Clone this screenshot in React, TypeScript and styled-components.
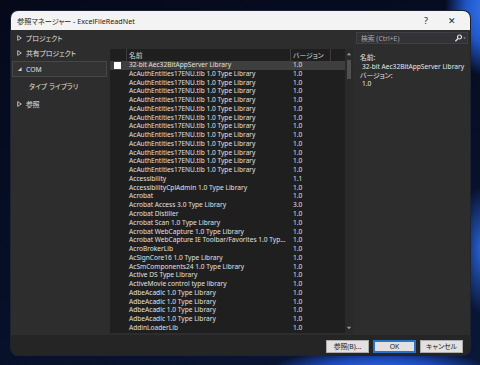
import React from "react";
import styled, { createGlobalStyle } from "styled-components";

const GlobalStyle = createGlobalStyle`
  html, body { margin: 0; padding: 0; }
  body {
    width: 480px;
    height: 365px;
    overflow: hidden;
    font-family: "Noto Sans", "Noto Sans CJK JP", sans-serif;
    font-feature-settings: "palt";
  }
`;

const Page = styled.div`
  width: 480px;
  height: 365px;
  box-sizing: border-box;
  padding: 11px 10px 10px 11px;
  background:
    radial-gradient(ellipse 60px 90px at 490px 10px, #3a7df0 0%, #1f56c8 40%, rgba(10,30,90,0) 75%),
    radial-gradient(ellipse 140px 30px at 380px 372px, #2f6fe8 0%, #1b48b8 45%, rgba(10,30,90,0) 80%),
    radial-gradient(ellipse 30px 80px at 482px 250px, #2a64db 0%, rgba(10,30,90,0) 80%),
    linear-gradient(160deg, #05091a 0%, #071028 60%, #0a1738 100%);
`;

const Dialog = styled.div`
  width: 459px;
  height: 344px;
  display: flex;
  flex-direction: column;
  border-radius: 7px;
  overflow: hidden;
  background: #2d2d2d;
  box-shadow: 0 0 0 1px #1c2433;
`;

const TitleBar = styled.div`
  height: 19px;
  flex: none;
  display: flex;
  align-items: center;
  background: #f3f3f3;
  padding-left: 6px;
  color: #1a1a1a;
  font-size: 7.2px;
`;

const TitleText = styled.span`
  flex: 1;
`;

const TitleButton = styled.span<{ $w: number }>`
  width: ${(p) => p.$w}px;
  text-align: center;
  font-size: 9px;
  color: #222;
`;

const Body = styled.div`
  flex: 1;
  display: grid;
  grid-template-columns: 97px 243px 115px;
  column-gap: 2px;
  min-height: 0;
`;

const LeftPanel = styled.div`
  display: flex;
  flex-direction: column;
  padding-left: 1px;
`;

const NavItem = styled.div<{ $selected?: boolean; $indent?: boolean; $h: number }>`
  height: ${(p) => p.$h}px;
  display: flex;
  align-items: center;
  box-sizing: border-box;
  padding-left: ${(p) => (p.$indent ? 16 : 4)}px;
  gap: 4px;
  font-size: 6.8px;
  color: #e0e0e0;
  border: 1px solid ${(p) => (p.$selected ? "#474747" : "transparent")};
  background: ${(p) => (p.$selected ? "#333333" : "transparent")};
  margin-right: 1px;
`;

const Arrow = styled.svg`
  width: 5px;
  height: 6px;
  flex: none;
`;

const Center = styled.div`
  padding-top: 19px;
  padding-bottom: 2px;
  display: flex;
  min-height: 0;
`;

const ListMain = styled.div`
  width: 235px;
  background: #1f1f1f;
  display: flex;
  flex-direction: column;
  overflow: hidden;
`;

const COLS = "17px 164px 40px 14px";

const HeaderRow = styled.div`
  height: 12px;
  flex: none;
  display: grid;
  grid-template-columns: ${COLS};
  font-size: 6.8px;
  color: #d8d8d8;
`;

const HeaderCell = styled.div<{ $last?: boolean }>`
  border-right: 1px solid ${(p) => (p.$last ? "transparent" : "#3c3c3c")};
  display: flex;
  align-items: center;
  padding-left: 2px;
  box-sizing: border-box;
`;

const Row = styled.div<{ $selected?: boolean }>`
  height: 8.77px;
  flex: none;
  display: grid;
  grid-template-columns: ${COLS};
  align-items: center;
  font-size: 6.6px;
  line-height: 8.77px;
  color: #e0e0e0;
  background: ${(p) => (p.$selected ? "#3f3f3f" : "transparent")};
`;

const Cell = styled.div`
  padding-left: 2px;
  white-space: nowrap;
  overflow: hidden;
`;

const CheckCell = styled.div`
  display: flex;
  align-items: center;
  padding-left: 4px;
`;

const CheckBox = styled.div`
  width: 7px;
  height: 7px;
  background: #ffffff;
`;

const ScrollBar = styled.div`
  width: 8px;
  background: #2a2a2a;
  display: flex;
  flex-direction: column;
  align-items: center;
`;

const ScrollArrow = styled.svg`
  width: 6px;
  height: 6px;
  flex: none;
  margin: 2px 0;
`;

const Thumb = styled.div`
  width: 4px;
  height: 19px;
  background: #505050;
  margin-top: 1px;
`;

const Spacer = styled.div`
  flex: 1;
`;

const RightPanel = styled.div`
  display: flex;
  flex-direction: column;
  padding-top: 2px;
  padding-right: 2px;
`;

const Search = styled.div`
  height: 12px;
  box-sizing: border-box;
  background: #333337;
  border: 1px solid #3f3f46;
  display: flex;
  align-items: center;
  padding-left: 4px;
  margin-left: 1px;
  font-size: 6.8px;
  color: #a8a8a8;
`;

const SearchText = styled.span`
  flex: 1;
`;

const Details = styled.div`
  padding: 10px 0 0 5px;
  display: flex;
  flex-direction: column;
  font-size: 6.6px;
  color: #e8e8e8;
  line-height: 8.8px;
`;

const DetailLabel = styled.div`
  font-size: 6.8px;
`;

const DetailValue = styled.div`
  padding-left: 2px;
  white-space: nowrap;
`;

const BottomBar = styled.div`
  height: 20px;
  flex: none;
  background: #252525;
  display: flex;
  justify-content: flex-end;
  align-items: center;
  gap: 4px;
  padding-right: 7px;
  padding-top: 2px;
  box-sizing: border-box;
`;

const Button = styled.div<{ $focused?: boolean }>`
  width: 43px;
  height: 13px;
  box-sizing: border-box;
  background: #e1e1e1;
  border: 1px solid ${(p) => (p.$focused ? "#2a73c9" : "#adadad")};
  box-shadow: ${(p) => (p.$focused ? "inset 0 0 0 1px #2a73c9" : "none")};
  display: flex;
  align-items: center;
  justify-content: center;
  font-size: 6.8px;
  color: #1a1a1a;
`;

const rows: [string, string][] = [
  ["32-bit Aec32BitAppServer Library", "1.0"],
  ...Array.from({ length: 12 }, () => ["AcAuthEntities17ENU.tlb 1.0 Type Library", "1.0"] as [string, string]),
  ["Accessibility", "1.1"],
  ["AccessibilityCplAdmin 1.0 Type Library", "1.0"],
  ["Acrobat", "1.0"],
  ["Acrobat Access 3.0 Type Library", "3.0"],
  ["Acrobat Distiller", "1.0"],
  ["Acrobat Scan 1.0 Type Library", "1.0"],
  ["Acrobat WebCapture 1.0 Type Library", "1.0"],
  ["Acrobat WebCapture IE Toolbar/Favorites 1.0 Typ...", "1.0"],
  ["AcroBrokerLib", "1.0"],
  ["AcSignCore16 1.0 Type Library", "1.0"],
  ["AcSmComponents24 1.0 Type Library", "1.0"],
  ["Active DS Type Library", "1.0"],
  ["ActiveMovie control type library", "1.0"],
  ["AdbeAcadlc 1.0 Type Library", "1.0"],
  ["AdbeAcadlc 1.0 Type Library", "1.0"],
  ["AdbeAcadlc 1.0 Type Library", "1.0"],
  ["AdbeAcadlc 1.0 Type Library", "1.0"],
  ["AddinLoaderLib", "1.0"],
];

const RightArrow = () => (
  <Arrow viewBox="0 0 5 6">
    <path d="M0.7 0.6 L4.3 3 L0.7 5.4 Z" fill="none" stroke="#c8c8c8" strokeWidth="0.9" />
  </Arrow>
);

const DownArrow = () => (
  <Arrow viewBox="0 0 5 6">
    <path d="M4.6 1.2 L4.6 5 L0.8 5 Z" fill="#d0d0d0" />
  </Arrow>
);

export default function App() {
  return (
    <>
      <GlobalStyle />
      <Page>
        <Dialog>
          <TitleBar>
            <TitleText>参照マネージャー - ExcelFileReadNet</TitleText>
            <TitleButton $w={16}>?</TitleButton>
            <TitleButton $w={36}>✕</TitleButton>
          </TitleBar>
          <Body>
            <LeftPanel>
              <NavItem $h={15}>
                <RightArrow />
                プロジェクト
              </NavItem>
              <NavItem $h={16}>
                <RightArrow />
                共有プロジェクト
              </NavItem>
              <NavItem $h={16} $selected>
                <DownArrow />
                COM
              </NavItem>
              <NavItem $h={18} $indent>
                タイプ ライブラリ
              </NavItem>
              <NavItem $h={18}>
                <RightArrow />
                参照
              </NavItem>
            </LeftPanel>
            <Center>
              <ListMain>
                <HeaderRow>
                  <HeaderCell />
                  <HeaderCell>名前</HeaderCell>
                  <HeaderCell>バージョン</HeaderCell>
                  <HeaderCell $last />
                </HeaderRow>
                {rows.map(([name, ver], i) => (
                  <Row key={i} $selected={i === 0}>
                    <CheckCell>{i === 0 && <CheckBox />}</CheckCell>
                    <Cell>{name}</Cell>
                    <Cell>{ver}</Cell>
                    <Cell />
                  </Row>
                ))}
              </ListMain>
              <ScrollBar>
                <ScrollArrow viewBox="0 0 6 6">
                  <path d="M0.8 4.2 L3 1.8 L5.2 4.2 Z" fill="#9a9a9a" />
                </ScrollArrow>
                <Thumb />
                <Spacer />
                <ScrollArrow viewBox="0 0 6 6">
                  <path d="M0.8 1.8 L3 4.2 L5.2 1.8 Z" fill="#9a9a9a" />
                </ScrollArrow>
              </ScrollBar>
            </Center>
            <RightPanel>
              <Search>
                <SearchText>検索 (Ctrl+E)</SearchText>
                <svg width="14" height="8" viewBox="0 0 14 8">
                  <circle cx="6.5" cy="3" r="2" fill="none" stroke="#e0e0e0" strokeWidth="1.2" />
                  <path d="M5 4.6 L2.4 7.2" stroke="#e0e0e0" strokeWidth="1.4" />
                  <path d="M10.2 3.4 L12.6 3.4 L11.4 4.8 Z" fill="#c0c0c0" />
                </svg>
              </Search>
              <Details>
                <DetailLabel>名前:</DetailLabel>
                <DetailValue>32-bit Aec32BitAppServer Library</DetailValue>
                <DetailLabel>バージョン:</DetailLabel>
                <DetailValue>1.0</DetailValue>
              </Details>
            </RightPanel>
          </Body>
          <BottomBar>
            <Button>参照(B)...</Button>
            <Button $focused>OK</Button>
            <Button>キャンセル</Button>
          </BottomBar>
        </Dialog>
      </Page>
    </>
  );
}
